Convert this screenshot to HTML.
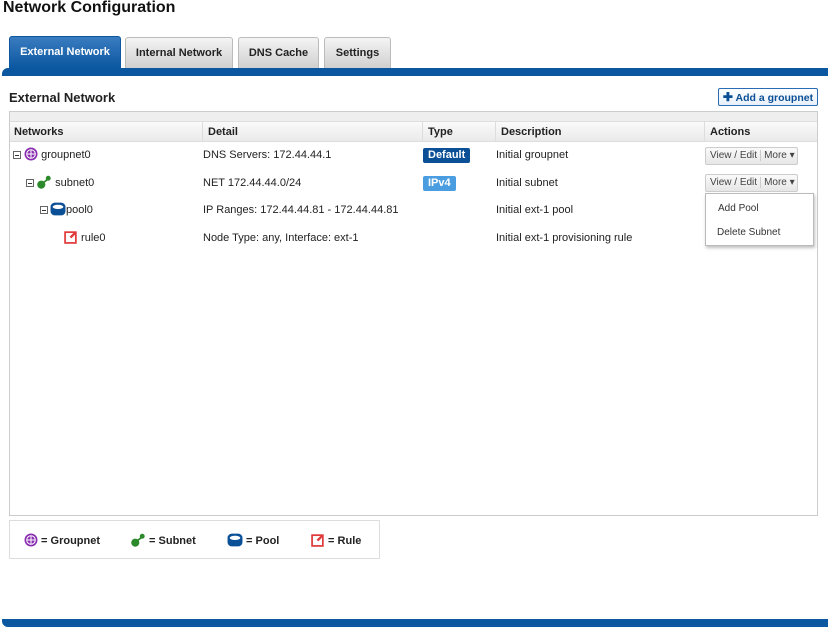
<!DOCTYPE html>
<html><head><style>
*{box-sizing:border-box;margin:0;padding:0}
body{width:830px;height:635px;background:#fff;font-family:"Liberation Sans",Arial,sans-serif;font-size:11px;color:#222;position:relative;overflow:hidden}
.a{position:absolute}
.tab{position:absolute;top:37px;height:31px;border:1px solid #bbb;border-bottom:none;border-radius:3px 3px 0 0;background:linear-gradient(#f4f4f4,#d0d0d0);font-weight:bold;font-size:11px;text-align:center;line-height:31px;color:#222}
.tab.on{background:linear-gradient(#3a7cc0,#0b57a0);color:#fff;border-color:#0b57a0;top:36px;height:32px}
.hd{position:absolute;top:122px;height:20px;line-height:20px;font-weight:bold;padding-left:5px;border-left:1px solid #ddd}
.row{position:absolute;left:0;width:100%;height:20px;line-height:20px}
.vb{position:absolute;height:18px;border:1px solid #ccc;border-radius:2px;background:linear-gradient(#fafafa,#e6e6e6);font-size:10px;line-height:16px;color:#444}
.mx{display:inline-block;width:8px;height:8px;border:1px solid #666;vertical-align:middle;position:relative;background:#fff}
.mx:after{content:"";position:absolute;left:1px;top:3px;width:4px;height:1px;background:#333}
svg{vertical-align:-3px}
</style></head><body>
<div class="a" style="left:3px;top:-1px;font-size:16px;font-weight:bold;color:#111">Network Configuration</div>
<div class="tab on" style="left:9px;width:112px">External Network</div>
<div class="tab" style="left:125px;width:108px">Internal Network</div>
<div class="tab" style="left:238px;width:81px">DNS Cache</div>
<div class="tab" style="left:324px;width:67px">Settings</div>
<div class="a" style="left:2px;top:68px;width:826px;height:8px;background:#0b57a0;border-radius:6px 0 0 0"></div>
<div class="a" style="left:9px;top:90px;font-size:13px;font-weight:bold">External Network</div>
<div class="a" style="left:718px;top:88px;width:100px;height:18px;border:1px solid #2a6db5;border-radius:2px;background:linear-gradient(#fff,#e8f0fa);color:#0b4f96;font-weight:bold;font-size:10.5px;line-height:16px;text-align:center;white-space:nowrap"><span style="font-size:12px">✚</span> Add a groupnet</div>
<div class="a" style="left:9px;top:111px;width:809px;height:405px;border:1px solid #ccc"></div>
<div class="a" style="left:10px;top:112px;width:807px;height:10px;background:#eee;border-bottom:1px solid #ddd"></div>
<div class="a" style="left:10px;top:122px;width:807px;height:20px;background:linear-gradient(#fafafa,#eaeaea);border-bottom:1px solid #ddd"></div>
<div class="hd" style="left:9px;border:none">Networks</div>
<div class="hd" style="left:202px">Detail</div>
<div class="hd" style="left:422px">Type</div>
<div class="hd" style="left:495px">Description</div>
<div class="hd" style="left:704px">Actions</div>
<div class="a" style="left:0;top:145px;width:830px">
<div class="row" style="top:0"><span class="a" style="left:13px"><span class="mx"></span> <svg width="14" height="14" viewBox="0 0 14 14"><circle cx="7" cy="7" r="6.5" fill="#8a2fb0"/><circle cx="7" cy="7" r="4.3" fill="none" stroke="#fff" stroke-width="1"/><path d="M2.5 7h9M7 2.5v9" stroke="#fff"/></svg> groupnet0</span><span class="a" style="left:203px">DNS Servers: 172.44.44.1</span><span class="a" style="left:423px;top:3px;height:15px;line-height:15px;padding:0 5px;background:#0b4f96;color:#fff;font-weight:bold;border-radius:2px">Default</span><span class="a" style="left:496px">Initial groupnet</span></div>
<div class="row" style="top:28px"><span class="a" style="left:26px"><span class="mx"></span> <svg width="15" height="14" viewBox="0 0 14 13"><circle cx="4" cy="9" r="3.8" fill="#2c8a2c"/><circle cx="10.5" cy="3" r="2.3" fill="#2c8a2c"/><path d="M6 7l4-3" stroke="#2c8a2c" stroke-width="1.6"/></svg> subnet0</span><span class="a" style="left:203px">NET 172.44.44.0/24</span><span class="a" style="left:423px;top:3px;height:15px;line-height:15px;padding:0 5px;background:#4a9de0;color:#fff;font-weight:bold;border-radius:2px">IPv4</span><span class="a" style="left:496px">Initial subnet</span></div>
<div class="row" style="top:55px"><span class="a" style="left:40px"><span class="mx"></span><svg width="16" height="14" viewBox="0 0 15 13" style="margin-left:2px"><rect x="0.5" y="0.5" width="14" height="12" rx="4" fill="#0b4f96"/><ellipse cx="7.5" cy="4.5" rx="5" ry="2" fill="#fff"/></svg>pool0</span><span class="a" style="left:203px">IP Ranges: 172.44.44.81 - 172.44.44.81</span><span class="a" style="left:496px">Initial ext-1 pool</span></div>
<div class="row" style="top:83px"><span class="a" style="left:64px"><svg width="14" height="14" viewBox="0 0 13 13"><rect x="1" y="2" width="10" height="10" fill="#fff" stroke="#e03a3a" stroke-width="1.6"/><path d="M6 7l5-5" stroke="#e03a3a" stroke-width="2.2"/></svg> rule0</span><span class="a" style="left:203px">Node Type: any, Interface: ext-1</span><span class="a" style="left:496px">Initial ext-1 provisioning rule</span></div>
</div>
<div class="vb" style="left:705px;top:147px;width:93px"><span style="padding-left:4px">View / Edit</span><span style="border-left:1px solid #ccc;margin-left:3px;padding-left:3px">More ▾</span></div>
<div class="vb" style="left:705px;top:174px;width:93px"><span style="padding-left:4px">View / Edit</span><span style="border-left:1px solid #ccc;margin-left:3px;padding-left:3px">More ▾</span></div>
<div class="a" style="left:705px;top:193px;width:109px;height:53px;background:#fff;border:1px solid #bbb;box-shadow:1px 2px 3px rgba(0,0,0,.25);font-size:10px;color:#333">
<div class="a" style="left:12px;top:9px">Add Pool</div><div class="a" style="left:11px;top:33px">Delete Subnet</div></div>
<div class="a" style="left:9px;top:520px;width:371px;height:39px;border:1px solid #ddd;font-weight:bold;font-size:11px">
<span class="a" style="left:14px;top:12px"><svg width="14" height="14" viewBox="0 0 14 14"><circle cx="7" cy="7" r="6.5" fill="#8a2fb0"/><circle cx="7" cy="7" r="4.3" fill="none" stroke="#fff"/><path d="M2.5 7h9M7 2.5v9" stroke="#fff"/></svg> = Groupnet</span>
<span class="a" style="left:121px;top:12px"><svg width="15" height="14" viewBox="0 0 14 13"><circle cx="4" cy="9" r="3.8" fill="#2c8a2c"/><circle cx="10.5" cy="3" r="2.3" fill="#2c8a2c"/><path d="M6 7l4-3" stroke="#2c8a2c" stroke-width="1.6"/></svg> = Subnet</span>
<span class="a" style="left:217px;top:12px"><svg width="16" height="14" viewBox="0 0 15 13"><rect x="0.5" y="0.5" width="14" height="12" rx="4" fill="#0b4f96"/><ellipse cx="7.5" cy="4.5" rx="5" ry="2" fill="#fff"/></svg> = Pool</span>
<span class="a" style="left:301px;top:12px"><svg width="14" height="14" viewBox="0 0 13 13"><rect x="1" y="2" width="10" height="10" fill="#fff" stroke="#e03a3a" stroke-width="1.6"/><path d="M6 7l5-5" stroke="#e03a3a" stroke-width="2.2"/></svg> = Rule</span>
</div>
<div class="a" style="left:2px;top:619px;width:826px;height:8px;background:#0b57a0;border-radius:0 0 0 6px"></div>
</body></html>
